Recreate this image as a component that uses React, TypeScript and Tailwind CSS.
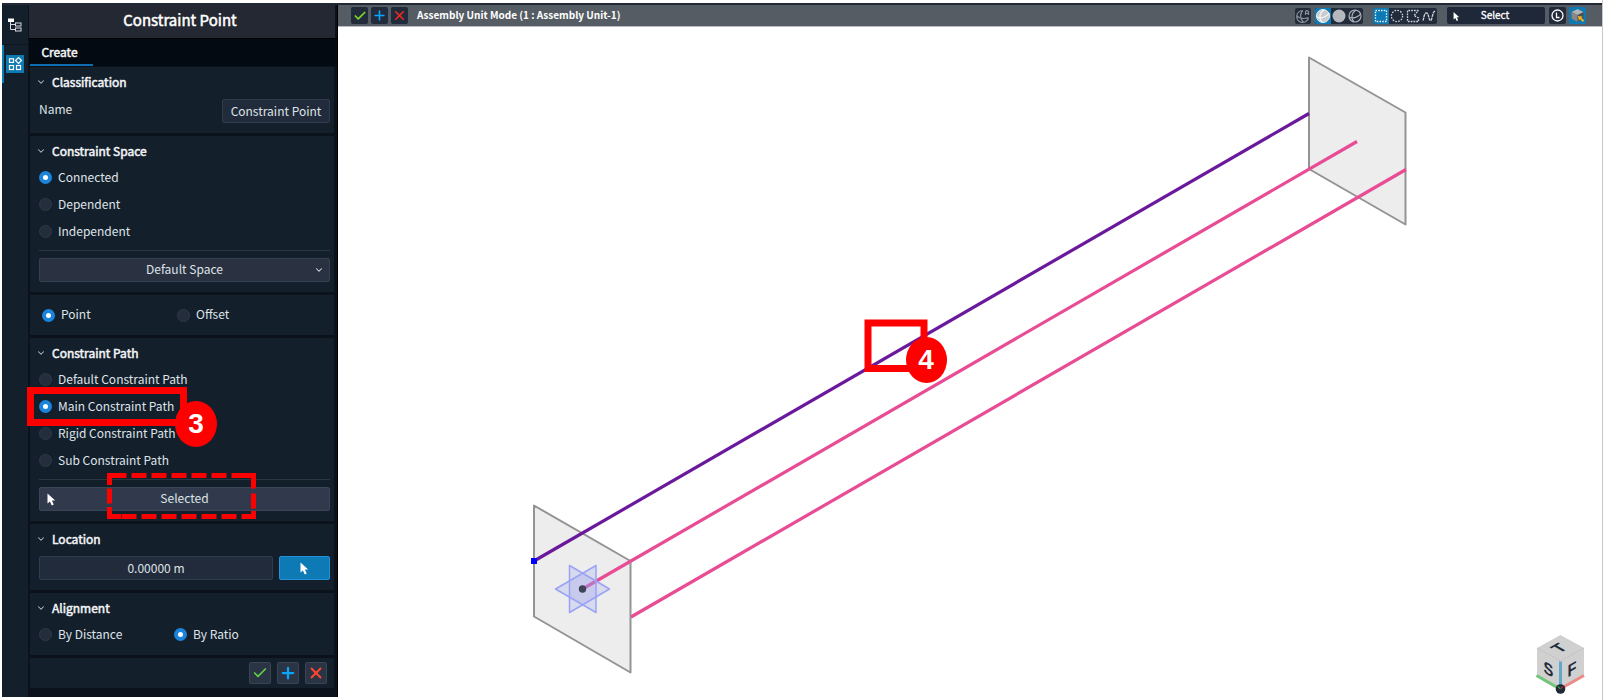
import React from 'react';
import { Check, Plus, X, ChevronDown } from 'lucide-react';

function Cursor({ className = '' }: { className?: string }) {
    return (
        <svg viewBox="0 0 9 13" className={`h-[13px] w-[9px] ${className}`} aria-hidden="true">
            <path d="M0.5 0.5V10.5L2.9 8.4L4.8 12.4L6.7 11.5L4.9 7.6H8.2Z" fill="#fff" />
        </svg>
    );
}

function Section({ title, children }: { title?: string; children: React.ReactNode }) {
    return (
        <section className="mr-[3px] ml-px bg-[#141f2c] pr-1 pl-[9px]">
            {title && (
                <h2 className="flex h-[26px] items-center gap-1.5 pt-1 text-[#f2f4f6] [-webkit-text-stroke:0.5px]">
                    <ChevronDown size={10} strokeWidth={2.5} className="-ml-[3px] shrink-0 text-[#b8bec6]" />
                    {title}
                </h2>
            )}
            {children}
        </section>
    );
}

type RadioProps = { name: string; label: string; checked?: boolean; children?: React.ReactNode };

function Radio({ name, label, checked, children }: RadioProps) {
    return (
        <div className="relative flex h-[27px] w-[135px] items-center">
            <label className="flex items-center gap-1.5 whitespace-nowrap">
                <input
                    type="radio"
                    name={name}
                    defaultChecked={checked}
                    className="size-[13px] shrink-0 appearance-none rounded-full border border-[#2f3947] bg-[#232d3b] checked:border-4 checked:border-[#1a84dc] checked:bg-white"
                />
                <span className="pb-0.5">{label}</span>
            </label>
            {children}
        </div>
    );
}

function Divider() {
    return <hr className="mt-[5px] mb-[7px] border-t border-[#2b3643]" />;
}

function SidePanel() {
    return (
        <aside className="flex w-[309px] shrink-0 flex-col border-r border-black bg-[#0b121c]">
            <h1 className="mr-[2px] flex h-[33px] items-center justify-center bg-[#242832] pr-1 pb-1 text-[15px] text-white [-webkit-text-stroke:0.5px]">
                Constraint Point
            </h1>
            <div className="mb-px flex h-7 border-t border-black bg-[#040a11] pl-px">
                <button className="h-[27px] w-[63px] border-b-2 border-[#0f6cae] pr-1 text-[#f2f4f6] [-webkit-text-stroke:0.5px]">Create</button>
            </div>

            <div className="flex flex-col gap-[3px]">
                <Section title="Classification">
                    <div className="flex items-center justify-between pt-1.5 pb-2.5">
                        <label htmlFor="point-name" className="pb-1">Name</label>
                        <input
                            id="point-name"
                            defaultValue="Constraint Point"
                            className="h-6 w-[108px] rounded-[2px] border border-[#303b4b] bg-[#222b3b] pb-0.5 text-center"
                        />
                    </div>
                </Section>

                <Section title="Constraint Space">
                    <div className="pt-0.5 pb-2.5">
                        <Radio name="space" label="Connected" checked />
                        <Radio name="space" label="Dependent" />
                        <Radio name="space" label="Independent" />
                        <Divider />
                        <div className="relative">
                            <select
                                aria-label="Space"
                                className="block h-6 w-full appearance-none rounded-[2px] border border-[#354153] bg-[#2a3242] pb-0.5 text-center [text-align-last:center]"
                            >
                                <option>Default Space</option>
                            </select>
                            <ChevronDown size={10} strokeWidth={2.5} className="pointer-events-none absolute top-[7px] right-1.5" />
                        </div>
                    </div>
                </Section>

                <Section>
                    <div className="flex h-10 items-center pl-[3px]">
                        <Radio name="mode" label="Point" checked />
                        <Radio name="mode" label="Offset" />
                    </div>
                </Section>

                <Section title="Constraint Path">
                    <div className="pt-0.5 pb-2.5">
                        <Radio name="path" label="Default Constraint Path" />
                        <Radio name="path" label="Main Constraint Path" checked>
                            <div className="pointer-events-none absolute -top-1.5 -left-3 z-10 h-[39px] w-40 border-[7px] border-[#fe0000]" />
                            <div className="pointer-events-none absolute top-2 left-[136px] z-10 flex h-[46px] w-[42px] items-center justify-center rounded-[50%] bg-[#fe0000] font-['Liberation_Sans',sans-serif] text-[28px] leading-none font-bold text-white">
                                3
                            </div>
                        </Radio>
                        <Radio name="path" label="Rigid Constraint Path" />
                        <Radio name="path" label="Sub Constraint Path" />
                        <Divider />
                        <div className="relative">
                            <button className="relative block h-6 w-full rounded-[2px] border border-[#3a4557] bg-[#303a4c] pb-0.5">
                                <Cursor className="absolute top-[5px] left-[7px]" />
                                Selected
                            </button>
                            <svg className="pointer-events-none absolute -top-3.5 left-[68px] h-[46px] w-[149px]" aria-hidden="true">
                                <rect x="2.5" y="2.5" width="144" height="41" fill="none" stroke="#fe0000" strokeWidth="5" strokeDasharray="15 5" strokeDashoffset="-2" />
                                <path d="M0 2.5H17M2.5 0V12M132 2.5H149M146.5 0V12M0 43.5H14M2.5 34V46M137 43.5H149M146.5 38V46" fill="none" stroke="#fe0000" strokeWidth="5" />
                            </svg>
                        </div>
                    </div>
                </Section>

                <Section title="Location">
                    <div className="flex gap-1.5 pt-1.5 pb-2.5">
                        <input
                            aria-label="Location"
                            defaultValue="0.00000 m"
                            className="h-6 min-w-0 flex-1 rounded-[2px] border border-[#303b4b] bg-[#222b3b] pb-0.5 text-center"
                        />
                        <button aria-label="Pick location" className="flex h-6 w-[51px] items-center justify-center rounded-[2px] border border-[#2591dc] bg-[#0d7ab5]">
                            <Cursor />
                        </button>
                    </div>
                </Section>

                <Section title="Alignment">
                    <div className="flex pt-0.5 pb-[7px]">
                        <Radio name="align" label="By Distance" />
                        <Radio name="align" label="By Ratio" checked />
                    </div>
                </Section>

                <Section>
                    <div className="flex h-[30px] items-center justify-end gap-1.5 pr-[3px]">
                        <button aria-label="Apply" className="flex size-[22px] items-center justify-center rounded-[2px] border border-[#3a4455] bg-[#2b3445]">
                            <Check size={16} strokeWidth={2.5} className="text-[#5fd045]" />
                        </button>
                        <button aria-label="Add" className="flex size-[22px] items-center justify-center rounded-[2px] border border-[#3a4455] bg-[#2b3445]">
                            <Plus size={18} strokeWidth={3} className="text-[#0aa5ff]" />
                        </button>
                        <button aria-label="Cancel" className="flex size-[22px] items-center justify-center rounded-[2px] border border-[#3a4455] bg-[#2b3445]">
                            <X size={18} strokeWidth={2.5} className="text-[#ff4630]" />
                        </button>
                    </div>
                </Section>
            </div>
        </aside>
    );
}

function IconRail() {
    return (
        <nav className="w-[27px] shrink-0 border-r border-[#0b121c] bg-[#141f2c]">
            <button aria-label="Tree" className="flex h-10 w-full items-center justify-center border-b border-[#0d1620]">
                <svg viewBox="0 0 14 14" className="size-3.5" fill="none" stroke="#d5dade" aria-hidden="true">
                    <rect x="0" y="0.5" width="6" height="3.5" fill="#fff" stroke="none" />
                    <path d="M2.5 4V11.5H7.5M2.5 6.5H7.5" />
                    <rect x="7.5" y="5" width="5.5" height="3" />
                    <rect x="7.5" y="10" width="5.5" height="3" />
                </svg>
            </button>
            <button aria-label="Constraints" className="flex h-[38px] w-full items-center border-l-2 border-[#0d7ab5] pl-0.5">
                <svg viewBox="0 0 18 18" className="size-[18px] bg-[#0d7ab5]" fill="none" stroke="#fff" strokeWidth="1.2" aria-hidden="true">
                    <rect x="3.5" y="3.8" width="4" height="3.6" />
                    <rect x="3.5" y="10.5" width="4" height="4" />
                    <rect x="10.5" y="10.5" width="4" height="4" />
                    <path d="M12.5 2.5L15.5 5.5L12.5 8.5L9.5 5.5Z" />
                </svg>
            </button>
        </nav>
    );
}

function Toolbar() {
    return (
        <header className="flex h-[22px] shrink-0 items-center border-b border-[#b9bcbf] bg-[#555c63] pr-4 pl-[13px] text-[10px]">
            <div className="flex gap-[3px]">
                <button aria-label="Apply mode" className="flex size-[17px] items-center justify-center rounded-[2px] bg-[#222b3b]">
                    <Check size={14} strokeWidth={3} className="text-[#7fd52c]" />
                </button>
                <button aria-label="Add unit" className="flex size-[17px] items-center justify-center rounded-[2px] bg-[#222b3b]">
                    <Plus size={15} strokeWidth={2.5} className="text-[#0aa5ff]" />
                </button>
                <button aria-label="Exit mode" className="flex size-[17px] items-center justify-center rounded-[2px] bg-[#222b3b]">
                    <X size={15} strokeWidth={2.5} className="text-[#f5281c]" />
                </button>
            </div>
            <span className="ml-[9px] pb-0.5 font-bold text-white">Assembly Unit Mode (1 : Assembly Unit-1)</span>

            <div className="ml-auto flex items-center">
                <button aria-label="Automatic shading" className="size-4 rounded-[2px] bg-[#222b3b]">
                    <svg viewBox="0 0 16 16" fill="none" stroke="#8b9199" strokeWidth="1.2" aria-hidden="true">
                        <path d="M8 2.5A6 6 0 1 0 13.500 10M8 2.500C4.500 5 5 11.500 8.500 14M2 8C5 11 10 11 13.500 9.500" />
                        <path d="M10.500 7V3.500L12 2.500L13.500 3.500V7M10.500 5.500H13.500" />
                    </svg>
                </button>
                <div className="ml-1 flex overflow-hidden rounded-[2px] bg-[#222b3b]">
                    <button aria-label="Shaded with edges" className="size-4 bg-[#0d7ab5]">
                        <svg viewBox="0 0 16 16" aria-hidden="true">
                            <circle cx="8" cy="8" r="6.5" fill="#c9cdd0" stroke="#eef0f1" />
                            <path d="M9 1.800C4 5 4 11 7 14.200M1.800 9C6 11 12 9 14.300 5" fill="none" stroke="#f6f7f8" strokeWidth="1.200" />
                        </svg>
                    </button>
                    <button aria-label="Shaded" className="size-4">
                        <svg viewBox="0 0 16 16" aria-hidden="true">
                            <circle cx="8" cy="8" r="6.5" fill="#b4b8bc" />
                        </svg>
                    </button>
                    <button aria-label="Wireframe" className="size-4">
                        <svg viewBox="0 0 16 16" fill="none" stroke="#a9afb6" strokeWidth="1.200" aria-hidden="true">
                            <circle cx="8" cy="8" r="6" />
                            <path d="M9 2C4 5 4 11 7 14M2 9C6 11 12 9 14 5.500" />
                        </svg>
                    </button>
                </div>
                <div className="ml-[10px] flex overflow-hidden rounded-[2px] bg-[#222b3b]">
                    <button aria-label="Box select" className="size-4 bg-[#0d7ab5]">
                        <svg viewBox="0 0 16 16" fill="none" stroke="#f0f4f6" strokeWidth="1.300" strokeDasharray="1.500 1.250" aria-hidden="true">
                            <rect x="2.500" y="2.500" width="11" height="11" />
                        </svg>
                    </button>
                    <button aria-label="Circle select" className="size-4">
                        <svg viewBox="0 0 16 16" fill="none" stroke="#cfd4d9" strokeWidth="1.300" strokeDasharray="1.600 1.300" aria-hidden="true">
                            <circle cx="8" cy="8" r="5.600" />
                        </svg>
                    </button>
                    <button aria-label="Polygon select" className="size-4">
                        <svg viewBox="0 0 16 16" fill="none" stroke="#cfd4d9" strokeWidth="1.300" strokeDasharray="1.700 1.100" aria-hidden="true">
                            <path d="M13.500 2.500H2.500V13.500H13.500V10L9 7.500L13.500 2.500" />
                        </svg>
                    </button>
                    <button aria-label="Curve select" className="size-4">
                        <svg viewBox="0 0 16 16" fill="none" stroke="#cfd4d9" strokeWidth="1.300" strokeDasharray="3 0.600" aria-hidden="true">
                            <path d="M2 12.500C3 10 3 5 5.500 5S7.500 12.500 9.500 12.500S11 3 14.500 3" />
                        </svg>
                    </button>
                </div>
                <button className="relative ml-[10px] h-[17px] w-[98px] rounded-[2px] bg-[#1f2838] pr-0.5 pb-0.5 leading-none text-white [-webkit-text-stroke:0.3px]">
                    <Cursor className="absolute top-[3px] left-[5px] scale-75" />
                    Select
                </button>
                <button aria-label="Lock" className="ml-1 size-[17px] rounded-[2px] bg-[#222b3b]">
                    <svg viewBox="0 0 17 17" fill="none" stroke="#fff" strokeWidth="1.300" aria-hidden="true">
                        <circle cx="8.500" cy="8.500" r="5.500" />
                        <path d="M7.500 5.500V10.500H10.500" />
                    </svg>
                </button>
                <button aria-label="Pick solid" className="ml-[3px] size-[17px] rounded-[2px] bg-[#0d7ab5]">
                    <svg viewBox="0 0 17 17" aria-hidden="true">
                        <path d="M8.500 2L14.500 5V11.500L8.500 15L2.500 11.500V5Z" fill="#4c4f52" />
                        <path d="M8.500 2L14.500 5L8.500 8L2.500 5Z" fill="#b0b3b5" />
                        <path d="M2.500 5L8.500 8V15L2.500 11.500Z" fill="#85898c" />
                        <path d="M9 9L13.500 9.500L12.400 10.800L15.200 13.500L13.800 15L11.200 12.200L9.800 13.500Z" fill="#f6b21c" />
                    </svg>
                </button>
            </div>
        </header>
    );
}

function ModelView() {
    return (
        <svg viewBox="338 27 1264 670" preserveAspectRatio="xMinYMin meet" className="block min-h-0 w-full flex-1">
            {/* end plates */}
            <g fill="#ededed" stroke="#949494" strokeWidth="2" strokeLinejoin="round">
                <path d="M1309 57.500L1405.500 112.500V224.500L1309 169Z" />
                <path d="M534 505.500L630.500 561V672.500L534 616.500Z" />
            </g>

            {/* beams */}
            <g strokeWidth="3.200" fill="none">
                <path d="M582.500 589L1357 141.500M631 617L1406 169.500" stroke="#e84c94" />
                <path d="M534 561L1309 113.500" stroke="#6a189c" />
            </g>
            <path d="M630.500 561V590M1309 169L1340 187" stroke="#949494" strokeWidth="1" opacity="0.500" />

            {/* local axes marker */}
            <g fill="#96a0f0" fillOpacity="0.250" stroke="#9aa3f5" strokeWidth="1.500" strokeLinejoin="round">
                <path d="M569.500 565.500V612.500L609.500 589Z" />
                <path d="M596 565.500V612.500L555.500 589Z" />
            </g>
            <circle cx="582.500" cy="589" r="3.700" fill="#3d4358" />
            <rect x="531" y="558" width="6" height="6" fill="#0000ff" />

            {/* step 4 */}
            <rect x="868" y="323" width="56" height="45.500" fill="none" stroke="#fe0000" strokeWidth="7" />
            <ellipse cx="926.500" cy="360" rx="20.500" ry="23" fill="#fe0000" />
            <text x="926" y="369" textAnchor="middle" fill="#fff" className="font-['Liberation_Sans',sans-serif] text-[28px] font-bold">
                4
            </text>

            {/* view cube */}
            <path d="M1560.500 635L1584 648V676L1560.500 689L1537 676V648Z" fill="#d0d0d0" />
            <path d="M1537 648L1560.500 661L1584 648" fill="none" stroke="#bdbdbd" strokeDasharray="2 1.500" />
            <path d="M1536.500 675.500L1560 689" stroke="#72c478" strokeWidth="3" />
            <path d="M1584 675.500L1560 689" stroke="#ec8a8a" strokeWidth="3" />
            <path d="M1560.500 661.500V686" stroke="#5fa8c8" strokeWidth="3" />
            <circle cx="1560.500" cy="689" r="4.800" fill="#1f2836" />
            <path d="M1558 686.500L1560.500 689" stroke="#2f8f4a" strokeWidth="1.500" />
            <path d="M1560.500 689L1563 686.500" stroke="#a02c34" strokeWidth="1.500" />
            <g fill="#222b3b" textAnchor="middle" className="font-['Liberation_Sans',sans-serif] text-[17px] font-bold">
                <text transform="matrix(0.866 0.500 0 1 1548.500 675)">S</text>
                <text transform="matrix(0.866 -0.500 0 1 1572 675)">F</text>
                <text transform="matrix(0.866 -0.500 0.866 0.500 1564 651)">T</text>
            </g>
        </svg>
    );
}

export default function App() {
    return (
        <div className="flex h-screen min-h-[700px] flex-col border-r border-[#c8c8c8] bg-white pt-[3px] pb-[3px] pl-[2px] font-['Noto_Sans_CJK_KR',sans-serif] text-xs leading-5 text-[#dfe3e8]">
            <div className="h-0.5 shrink-0 bg-[#232836]" />
            <div className="flex min-h-0 flex-1">
                <IconRail />
                <SidePanel />
                <main className="flex min-w-0 flex-1 flex-col">
                    <Toolbar />
                    <ModelView />
                </main>
            </div>
        </div>
    );
}
